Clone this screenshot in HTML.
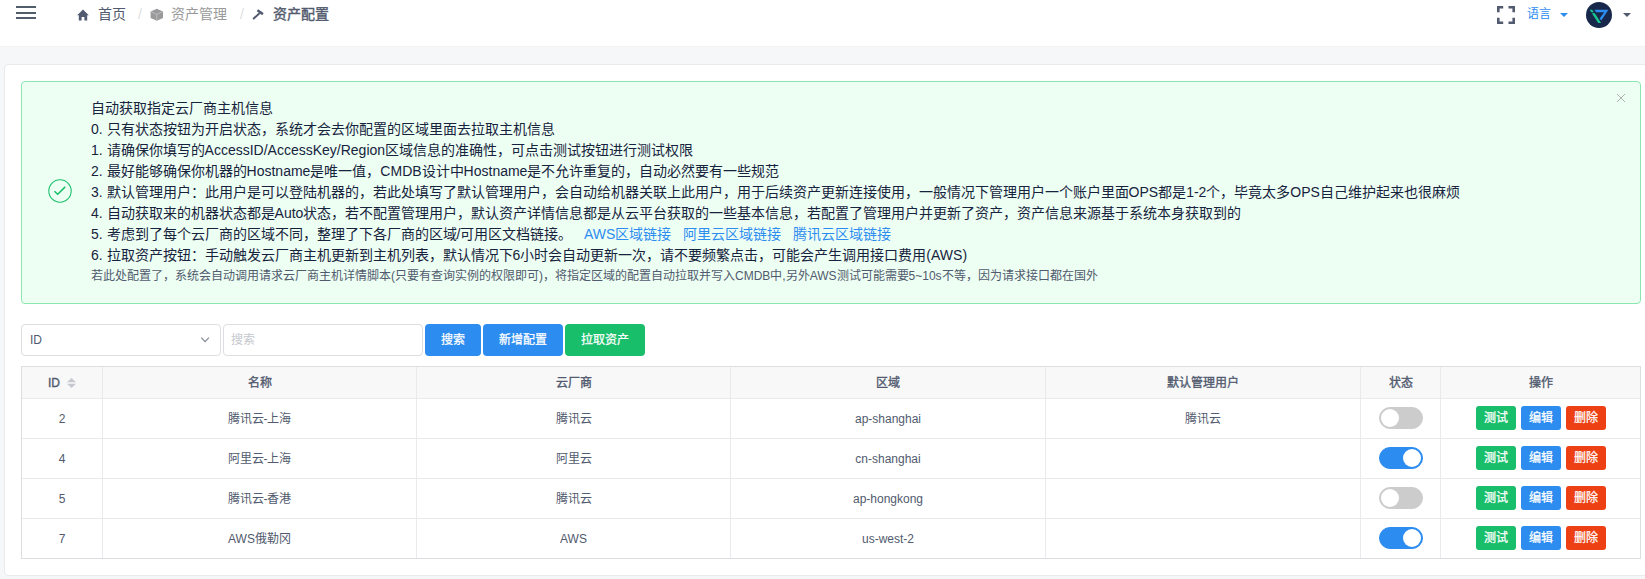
<!DOCTYPE html>
<html lang="zh-CN"><head><meta charset="utf-8">
<style>
*{box-sizing:border-box;margin:0;padding:0}
html,body{width:1645px;height:579px;overflow:hidden}
body{background:#f5f7f9;font-family:"Liberation Sans",sans-serif;color:#515a6e;font-size:12px;position:relative}
.abs{position:absolute}
#hdr{left:0;top:0;width:1645px;height:46px;background:#fff;box-shadow:0 1px 1px rgba(0,0,0,.02)}
.ham{left:16px;width:20px;height:2px;background:#525d6b}
.bc{top:5px;height:18px;line-height:18px;font-size:14px;white-space:nowrap}
.card{left:4px;top:64px;width:1654px;height:512px;background:#fff;border:1px solid #e8eaec;border-radius:4px}
.alert{left:21px;top:81px;width:1620px;height:223px;background:#edfff3;border:1px solid #8ce6b0;border-radius:4px}
.atext{left:91px;top:98px;font-size:14px;line-height:21px;white-space:nowrap;color:#17233d}
.atext div{height:21px}
.atext a{color:#2d8cf0;text-decoration:none}
.atext .sm{font-size:12px;color:#515a6e}
.sel{left:21px;top:324px;width:200px;height:32px;border:1px solid #dcdee2;border-radius:4px;background:#fff}
.inp{left:223px;top:324px;width:200px;height:32px;border:1px solid #dcdee2;border-radius:4px;background:#fff}
.btn{top:324px;height:32px;border-radius:4px;color:#fff;font-size:12px;-webkit-text-stroke:0.25px #fff;line-height:32px;text-align:center;white-space:nowrap}
.tbl{left:21px;top:366px;width:1620px;height:193px;border-top:1px solid #dcdee2;border-left:1px solid #dcdee2;background:#fff}
.th{top:367px;height:32px;background:#f8f8f9;border-bottom:1px solid #e8eaec;border-right:1px solid #e8eaec;-webkit-text-stroke:0.35px #515a6e;line-height:33px;text-align:center;color:#515a6e;white-space:nowrap}
.td{height:40px;border-bottom:1px solid #e8eaec;border-right:1px solid #e8eaec;line-height:40px;text-align:center;white-space:nowrap}
.sw{width:44px;height:22px;border-radius:11px;border:1px solid #ccc;background:#ccc}
.sw i{position:absolute;top:1px;left:1px;width:18px;height:18px;border-radius:50%;background:#fff}
.sw.on{border-color:#2d8cf0;background:#2d8cf0}
.sw.on i{left:23px}
.sb{height:24px;width:40px;border-radius:3px;color:#fff;font-size:12px;-webkit-text-stroke:0.25px #fff;line-height:24px;text-align:center}
</style></head><body>
<div id="hdr" class="abs">
  <div class="abs ham" style="top:6px"></div>
  <div class="abs ham" style="top:12px"></div>
  <div class="abs ham" style="top:17px"></div>
  <!-- home icon -->
  <svg class="abs" style="left:77px;top:9px" width="12" height="12" viewBox="0 0 12 12"><path d="M6 0.5L0.2 6.2H1.8V11.5H4.6V8H7.4V11.5H10.2V6.2H11.8Z" fill="#515a6e"/></svg>
  <div class="abs bc" style="left:98px;color:#515a6e">首页</div>
  <div class="abs bc" style="left:138px;color:#dcdee2">/</div>
  <svg class="abs" style="left:150px;top:8px" width="14" height="14" viewBox="0 0 14 14"><path d="M6.8 0.7L13 3.5V10L6.8 12.8L0.6 10V3.5Z" fill="#9a9a9a"/><path d="M0.9 3.6L6.8 6.4L12.7 3.6M6.8 6.4V12.6" stroke="#cfd2d6" stroke-width="0.6" fill="none"/></svg>
  <div class="abs bc" style="left:171px;color:#999">资产管理</div>
  <div class="abs bc" style="left:240px;color:#dcdee2">/</div>
  <svg class="abs" style="left:252px;top:8px" width="13" height="13" viewBox="0 0 13 13"><path d="M1.7 10.5L7 5.8" stroke="#515a6e" stroke-width="2" stroke-linecap="round"/><path d="M5.4 2.3L10.9 6.1" stroke="#515a6e" stroke-width="2.5"/></svg>
  <div class="abs bc" style="left:273px;color:#515a6e;-webkit-text-stroke:0.4px #515a6e">资产配置</div>
  <!-- fullscreen -->
  <svg class="abs" style="left:1497px;top:6px" width="18" height="18" viewBox="0 0 18 18" fill="none" stroke="#515a6e" stroke-width="2.6"><path d="M1.3 6.2V1.3H6.2M11.5 1.3H16.7V6.2M16.7 11.8V16.7H11.5M6.2 16.7H1.3V11.8"/></svg>
  <div class="abs" style="left:1527px;top:6px;font-size:12px;line-height:16px;color:#2d8cf0">语言</div>
  <svg class="abs" style="left:1560px;top:13px" width="8" height="4" viewBox="0 0 8 4"><path d="M0 0H8L4 4Z" fill="#2d8cf0"/></svg>
  <svg class="abs" style="left:1586px;top:2px" width="26" height="26" viewBox="0 0 26 26"><circle cx="13" cy="13" r="13" fill="#17284a"/><path d="M8.4 7.8H22.4L15.3 18.5L13.6 16.6L18.2 10.3H10.2Z" fill="#2d8cf0"/><path d="M3.6 7.8H6.1L7.9 10.2H5.4Z" fill="#19c592"/><path d="M5.9 11.2H8.8L15.1 20.9H12.2Z" fill="#19c592"/></svg>
  <svg class="abs" style="left:1623px;top:13px" width="8" height="4" viewBox="0 0 8 4"><path d="M0 0H8L4 4Z" fill="#515a6e"/></svg>
</div>

<div class="abs card"></div>
<div class="abs alert"></div>
<svg class="abs" style="left:48px;top:179px" width="24" height="24" viewBox="0 0 24 24" fill="none" stroke="#19be6b"><circle cx="12" cy="12" r="11.2" stroke-width="1.05"/><path d="M6.4 12.3L9.7 15.3L17.2 7.9" stroke-width="1.5"/></svg>
<svg class="abs" style="left:1616px;top:93px" width="10" height="10" viewBox="0 0 10 10" stroke="#a8a8a8" stroke-width="0.9"><path d="M1 1L9 9M9 1L1 9"/></svg>
<div class="abs atext">
<div>自动获取指定云厂商主机信息</div>
<div>0. 只有状态按钮为开启状态，系统才会去你配置的区域里面去拉取主机信息</div>
<div>1. 请确保你填写的AccessID/AccessKey/Region区域信息的准确性，可点击测试按钮进行测试权限</div>
<div>2. 最好能够确保你机器的Hostname是唯一值，CMDB设计中Hostname是不允许重复的，自动必然要有一些规范</div>
<div>3. 默认管理用户：此用户是可以登陆机器的，若此处填写了默认管理用户，会自动给机器关联上此用户，用于后续资产更新连接使用，一般情况下管理用户一个账户里面OPS都是1-2个，毕竟太多OPS自己维护起来也很麻烦</div>
<div>4. 自动获取来的机器状态都是Auto状态，若不配置管理用户，默认资产详情信息都是从云平台获取的一些基本信息，若配置了管理用户并更新了资产，资产信息来源基于系统本身获取到的</div>
<div>5. 考虑到了每个云厂商的区域不同，整理了下各厂商的区域/可用区文档链接。<a style="margin-left:11.5px">AWS区域链接</a><a style="margin-left:12px">阿里云区域链接</a><a style="margin-left:12px">腾讯云区域链接</a></div>
<div>6. 拉取资产按钮：手动触发云厂商主机更新到主机列表，默认情况下6小时会自动更新一次，请不要频繁点击，可能会产生调用接口费用(AWS)</div>
<div class="sm">若此处配置了，系统会自动调用请求云厂商主机详情脚本(只要有查询实例的权限即可)，将指定区域的配置自动拉取并写入CMDB中,另外AWS测试可能需要5~10s不等，因为请求接口都在国外</div>
</div>

<!-- search row -->
<div class="abs sel"><div class="abs" style="left:8px;top:0;line-height:30px;font-size:12px;color:#515a6e">ID</div>
<svg class="abs" style="left:178px;top:12px" width="10" height="6" viewBox="0 0 10 6" fill="none" stroke="#808695" stroke-width="1.2"><path d="M1.3 0.6L5.1 4.6L8.9 0.6"/></svg></div>
<div class="abs inp"><div class="abs" style="left:7px;top:0;line-height:30px;font-size:12px;color:#c5c8ce">搜索</div></div>
<div class="abs btn" style="left:425px;width:56px;background:#2d8cf0">搜索</div>
<div class="abs btn" style="left:483px;width:80px;background:#2d8cf0">新增配置</div>
<div class="abs btn" style="left:565px;width:80px;background:#19be6b">拉取资产</div>

<!-- table -->
<div class="abs tbl"></div>
<div id="rows">
<div class="abs th" style="left:22px;width:81px"><span class="abs" style="left:26px;top:0">ID</span><svg class="abs" style="left:45px;top:11px" width="9" height="10" viewBox="0 0 9 10"><path d="M4.5 0L9 4.2H0Z" fill="#c5c8ce"/><path d="M4.5 10L9 5.8H0Z" fill="#c5c8ce"/></svg></div>
<div class="abs th" style="left:103px;width:314px">名称</div>
<div class="abs th" style="left:417px;width:314px">云厂商</div>
<div class="abs th" style="left:731px;width:315px">区域</div>
<div class="abs th" style="left:1046px;width:315px">默认管理用户</div>
<div class="abs th" style="left:1361px;width:80px">状态</div>
<div class="abs th" style="left:1441px;width:200px">操作</div>
<div class="abs td" style="left:22px;top:399px;width:81px">2</div>
<div class="abs td" style="left:103px;top:399px;width:314px">腾讯云-上海</div>
<div class="abs td" style="left:417px;top:399px;width:314px">腾讯云</div>
<div class="abs td" style="left:731px;top:399px;width:315px">ap-shanghai</div>
<div class="abs td" style="left:1046px;top:399px;width:315px">腾讯云</div>
<div class="abs td" style="left:1361px;top:399px;width:80px"><div class="abs sw" style="left:18px;top:8px"><i></i></div></div>
<div class="abs td" style="left:1441px;top:399px;width:200px"><div class="abs sb" style="left:35px;top:7px;background:#19be6b">测试</div><div class="abs sb" style="left:80px;top:7px;background:#2d8cf0">编辑</div><div class="abs sb" style="left:125px;top:7px;background:#ed4014">删除</div></div>
<div class="abs td" style="left:22px;top:439px;width:81px">4</div>
<div class="abs td" style="left:103px;top:439px;width:314px">阿里云-上海</div>
<div class="abs td" style="left:417px;top:439px;width:314px">阿里云</div>
<div class="abs td" style="left:731px;top:439px;width:315px">cn-shanghai</div>
<div class="abs td" style="left:1046px;top:439px;width:315px"></div>
<div class="abs td" style="left:1361px;top:439px;width:80px"><div class="abs sw on" style="left:18px;top:8px"><i></i></div></div>
<div class="abs td" style="left:1441px;top:439px;width:200px"><div class="abs sb" style="left:35px;top:7px;background:#19be6b">测试</div><div class="abs sb" style="left:80px;top:7px;background:#2d8cf0">编辑</div><div class="abs sb" style="left:125px;top:7px;background:#ed4014">删除</div></div>
<div class="abs td" style="left:22px;top:479px;width:81px">5</div>
<div class="abs td" style="left:103px;top:479px;width:314px">腾讯云-香港</div>
<div class="abs td" style="left:417px;top:479px;width:314px">腾讯云</div>
<div class="abs td" style="left:731px;top:479px;width:315px">ap-hongkong</div>
<div class="abs td" style="left:1046px;top:479px;width:315px"></div>
<div class="abs td" style="left:1361px;top:479px;width:80px"><div class="abs sw" style="left:18px;top:8px"><i></i></div></div>
<div class="abs td" style="left:1441px;top:479px;width:200px"><div class="abs sb" style="left:35px;top:7px;background:#19be6b">测试</div><div class="abs sb" style="left:80px;top:7px;background:#2d8cf0">编辑</div><div class="abs sb" style="left:125px;top:7px;background:#ed4014">删除</div></div>
<div class="abs td" style="left:22px;top:519px;width:81px">7</div>
<div class="abs td" style="left:103px;top:519px;width:314px">AWS俄勒冈</div>
<div class="abs td" style="left:417px;top:519px;width:314px">AWS</div>
<div class="abs td" style="left:731px;top:519px;width:315px">us-west-2</div>
<div class="abs td" style="left:1046px;top:519px;width:315px"></div>
<div class="abs td" style="left:1361px;top:519px;width:80px"><div class="abs sw on" style="left:18px;top:8px"><i></i></div></div>
<div class="abs td" style="left:1441px;top:519px;width:200px"><div class="abs sb" style="left:35px;top:7px;background:#19be6b">测试</div><div class="abs sb" style="left:80px;top:7px;background:#2d8cf0">编辑</div><div class="abs sb" style="left:125px;top:7px;background:#ed4014">删除</div></div>
</div>
<div class="abs" style="left:1640px;top:366px;width:1px;height:193px;background:#dcdee2"></div>
<div class="abs" style="left:21px;top:558px;width:1620px;height:1px;background:#dcdee2"></div>
</body></html>
